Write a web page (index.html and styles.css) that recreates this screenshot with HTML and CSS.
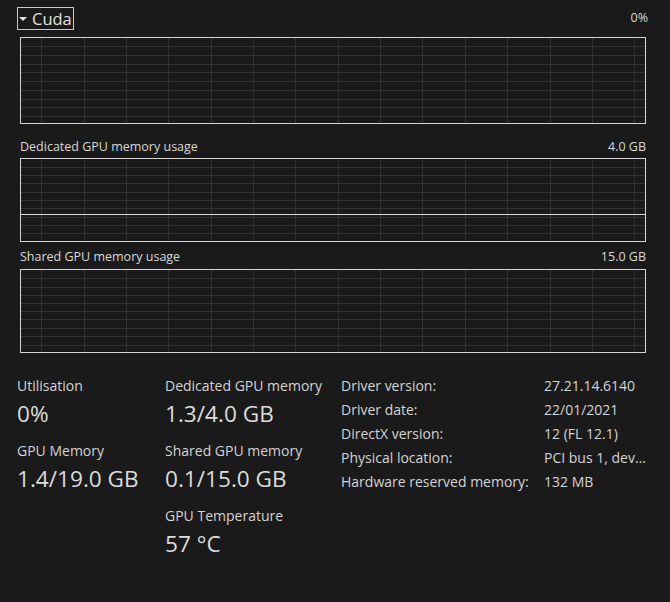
FILE: index.html
```html
<!DOCTYPE html>
<html>
<head>
<meta charset="utf-8">
<link rel="stylesheet" href="styles.css">
</head>
<body>
<div class="page">
  <div class="header">
    <div class="title-box"><span class="caret"></span><span class="title">Cuda</span></div>
    <div class="small">0%</div>
  </div>
  <div class="chart chart-main">
    <svg class="grid" width="624" height="85" viewBox="0 0 624 85" shape-rendering="crispEdges">
      <g stroke="#333333" stroke-width="1">
        <line x1="20.5" y1="0" x2="20.5" y2="85"/><line x1="63.5" y1="0" x2="63.5" y2="85"/><line x1="105.5" y1="0" x2="105.5" y2="85"/><line x1="147.5" y1="0" x2="147.5" y2="85"/><line x1="190.5" y1="0" x2="190.5" y2="85"/><line x1="232.5" y1="0" x2="232.5" y2="85"/><line x1="274.5" y1="0" x2="274.5" y2="85"/><line x1="317.5" y1="0" x2="317.5" y2="85"/><line x1="359.5" y1="0" x2="359.5" y2="85"/><line x1="401.5" y1="0" x2="401.5" y2="85"/><line x1="444.5" y1="0" x2="444.5" y2="85"/><line x1="486.5" y1="0" x2="486.5" y2="85"/><line x1="529.5" y1="0" x2="529.5" y2="85"/><line x1="571.5" y1="0" x2="571.5" y2="85"/><line x1="613.5" y1="0" x2="613.5" y2="85"/>
        <line x1="0" y1="8.5" x2="624" y2="8.5"/><line x1="0" y1="17.5" x2="624" y2="17.5"/><line x1="0" y1="26.5" x2="624" y2="26.5"/><line x1="0" y1="34.5" x2="624" y2="34.5"/><line x1="0" y1="43.5" x2="624" y2="43.5"/><line x1="0" y1="52.5" x2="624" y2="52.5"/><line x1="0" y1="61.5" x2="624" y2="61.5"/><line x1="0" y1="69.5" x2="624" y2="69.5"/><line x1="0" y1="78.5" x2="624" y2="78.5"/>
      </g>
    </svg>
  </div>
  <div class="chart-label label-first"><span>Dedicated GPU memory usage</span><span>4.0 GB</span></div>
  <div class="chart chart-sub">
    <svg class="grid" width="624" height="82" viewBox="0 0 624 82" shape-rendering="crispEdges">
      <g stroke="#333333" stroke-width="1">
        <line x1="20.5" y1="0" x2="20.5" y2="82"/><line x1="63.5" y1="0" x2="63.5" y2="82"/><line x1="105.5" y1="0" x2="105.5" y2="82"/><line x1="147.5" y1="0" x2="147.5" y2="82"/><line x1="190.5" y1="0" x2="190.5" y2="82"/><line x1="232.5" y1="0" x2="232.5" y2="82"/><line x1="274.5" y1="0" x2="274.5" y2="82"/><line x1="317.5" y1="0" x2="317.5" y2="82"/><line x1="359.5" y1="0" x2="359.5" y2="82"/><line x1="401.5" y1="0" x2="401.5" y2="82"/><line x1="444.5" y1="0" x2="444.5" y2="82"/><line x1="486.5" y1="0" x2="486.5" y2="82"/><line x1="529.5" y1="0" x2="529.5" y2="82"/><line x1="571.5" y1="0" x2="571.5" y2="82"/><line x1="613.5" y1="0" x2="613.5" y2="82"/>
        <line x1="0" y1="8.5" x2="624" y2="8.5"/><line x1="0" y1="16.5" x2="624" y2="16.5"/><line x1="0" y1="24.5" x2="624" y2="24.5"/><line x1="0" y1="33.5" x2="624" y2="33.5"/><line x1="0" y1="41.5" x2="624" y2="41.5"/><line x1="0" y1="49.5" x2="624" y2="49.5"/><line x1="0" y1="58.5" x2="624" y2="58.5"/><line x1="0" y1="66.5" x2="624" y2="66.5"/><line x1="0" y1="74.5" x2="624" y2="74.5"/>
      </g>
      <line x1="0" y1="55.5" x2="624" y2="55.5" stroke="#d8d8d8" stroke-width="1"/>
    </svg>
  </div>
  <div class="chart-label label-second"><span>Shared GPU memory usage</span><span>15.0 GB</span></div>
  <div class="chart chart-sub">
    <svg class="grid" width="624" height="82" viewBox="0 0 624 82" shape-rendering="crispEdges">
      <g stroke="#333333" stroke-width="1">
        <line x1="20.5" y1="0" x2="20.5" y2="82"/><line x1="63.5" y1="0" x2="63.5" y2="82"/><line x1="105.5" y1="0" x2="105.5" y2="82"/><line x1="147.5" y1="0" x2="147.5" y2="82"/><line x1="190.5" y1="0" x2="190.5" y2="82"/><line x1="232.5" y1="0" x2="232.5" y2="82"/><line x1="274.5" y1="0" x2="274.5" y2="82"/><line x1="317.5" y1="0" x2="317.5" y2="82"/><line x1="359.5" y1="0" x2="359.5" y2="82"/><line x1="401.5" y1="0" x2="401.5" y2="82"/><line x1="444.5" y1="0" x2="444.5" y2="82"/><line x1="486.5" y1="0" x2="486.5" y2="82"/><line x1="529.5" y1="0" x2="529.5" y2="82"/><line x1="571.5" y1="0" x2="571.5" y2="82"/><line x1="613.5" y1="0" x2="613.5" y2="82"/>
        <line x1="0" y1="8.5" x2="624" y2="8.5"/><line x1="0" y1="17.5" x2="624" y2="17.5"/><line x1="0" y1="25.5" x2="624" y2="25.5"/><line x1="0" y1="33.5" x2="624" y2="33.5"/><line x1="0" y1="41.5" x2="624" y2="41.5"/><line x1="0" y1="49.5" x2="624" y2="49.5"/><line x1="0" y1="58.5" x2="624" y2="58.5"/><line x1="0" y1="66.5" x2="624" y2="66.5"/><line x1="0" y1="75.5" x2="624" y2="75.5"/>
      </g>
    </svg>
  </div>

  <div class="stats">
    <div class="col col-a">
      <div class="stat-label">Utilisation</div>
      <div class="stat-value">0%</div>
      <div class="stat-label">GPU Memory</div>
      <div class="stat-value">1.4/19.0 GB</div>
    </div>
    <div class="col col-b">
      <div class="stat-label">Dedicated GPU memory</div>
      <div class="stat-value">1.3/4.0 GB</div>
      <div class="stat-label">Shared GPU memory</div>
      <div class="stat-value">0.1/15.0 GB</div>
      <div class="stat-label">GPU Temperature</div>
      <div class="stat-value">57 °C</div>
    </div>
    <div class="col col-c">
      <div class="info-row"><span class="info-key">Driver version:</span><span class="info-val">27.21.14.6140</span></div>
      <div class="info-row"><span class="info-key">Driver date:</span><span class="info-val">22/01/2021</span></div>
      <div class="info-row"><span class="info-key">DirectX version:</span><span class="info-val">12 (FL 12.1)</span></div>
      <div class="info-row"><span class="info-key">Physical location:</span><span class="info-val">PCI bus 1, dev…</span></div>
      <div class="info-row"><span class="info-key">Hardware reserved memory:</span><span class="info-val">132 MB</span></div>
    </div>
  </div>
</div>
</body>
</html>
```
FILE: styles.css
```css
html, body {
  margin: 0;
  padding: 0;
  background: #1a1a1a;
}
body {
  font-family: "Open Sans", "Noto Sans", sans-serif;
  color: #d8d8d8;
  width: 670px;
  height: 602px;
  overflow: hidden;
}
.page {
  padding: 7px 0 0 17px;
  width: 631px;
}
.header {
  display: flex;
  justify-content: space-between;
  align-items: flex-start;
  height: 23px;
}
.title-box {
  box-sizing: border-box;
  height: 23px;
  width: 57px;
  border: 1px solid #c8c8c8;
  display: flex;
  align-items: center;
  padding-left: 1px;
}
.caret {
  width: 0;
  height: 0;
  border-left: 4px solid transparent;
  border-right: 4px solid transparent;
  border-top: 4px solid #e6e6e6;
  margin: 1px 5px 0 0;
}
.title {
  font-size: 16.5px;
  line-height: 21px;
  color: #e0e0e0;
}
.small {
  font-size: 12.5px;
  line-height: 16px;
  padding-top: 3px;
}
.chart {
  margin-left: 3px;
  width: 624px;
  border: 1px solid #d4d4d4;
  line-height: 0;
}
.chart-main {
  margin-top: 7px;
  height: 85px;
}
.chart-sub {
  height: 82px;
}
.grid {
  display: block;
}
.chart-label {
  display: flex;
  justify-content: space-between;
  margin-left: 3px;
  width: 626px;
  font-size: 12.5px;
  line-height: 16px;
}
.label-first {
  margin-top: 15px;
  margin-bottom: 3px;
}
.label-second {
  margin-top: 7px;
  margin-bottom: 4px;
}
.stats {
  display: flex;
  margin-top: 23px;
}
.col-a {
  width: 148px;
}
.col-b {
  width: 176px;
}
.col-c {
  margin-top: -2px;
}
.stat-label {
  font-size: 14px;
  line-height: 20px;
  color: #d4d4d4;
}
.stat-value {
  font-size: 22.6px;
  line-height: 30px;
  margin-top: 3px;
  margin-bottom: 12px;
  color: #dcdcdc;
}
.info-row {
  display: flex;
  font-size: 14px;
  line-height: 24px;
  color: #d4d4d4;
}
.info-key {
  width: 203px;
}
```
